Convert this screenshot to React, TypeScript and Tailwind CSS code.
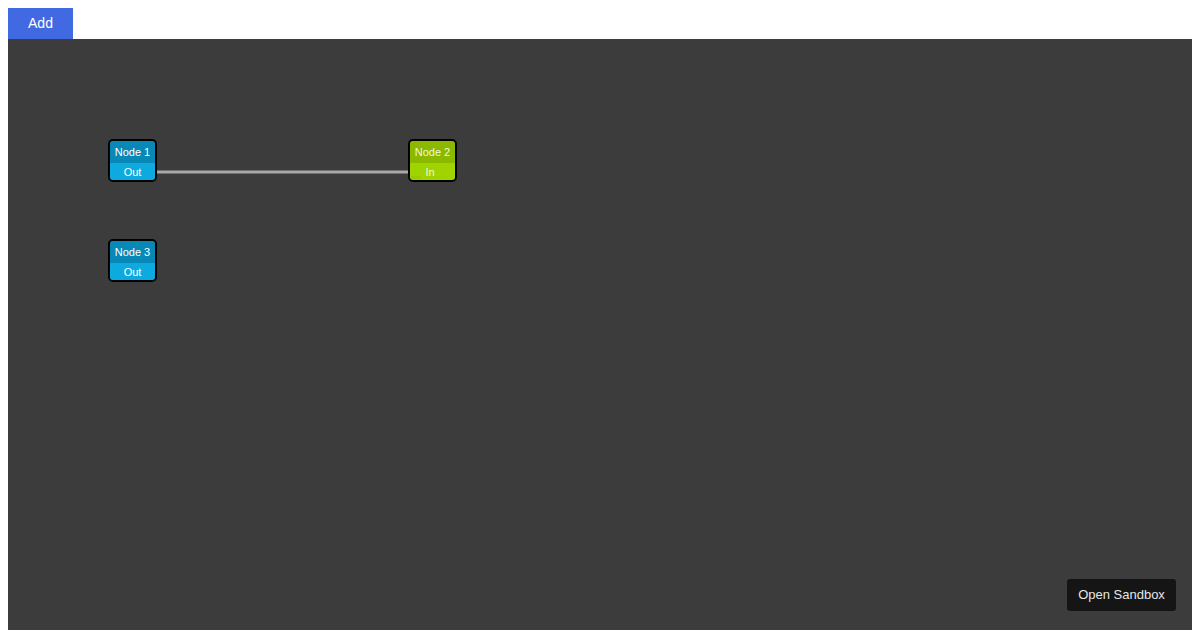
import React from "react";

type NodeProps = { x: number; y: number; title: string; port: string; variant: "blue" | "green" };

function Node({ x, y, title, port, variant }: NodeProps) {
  const head = variant === "blue" ? "bg-[#0888b6]" : "bg-[#8bb900]";
  const body = variant === "blue" ? "bg-[#0daae0]" : "bg-[#9fd400]";
  const txt = variant === "blue" ? "text-white" : "text-[#f4f7d8]";
  return (
    <div
      className="absolute w-[49px] border-2 border-black rounded-[5px] overflow-hidden"
      style={{ left: x, top: y }}
    >
      <div className={`h-[22px] ${head} ${txt} flex items-center justify-center text-[11px] leading-none`}>
        {title}
      </div>
      <div className={`relative h-[17px] ${body} ${txt} flex items-center justify-center text-[11px] leading-none pt-[1px]`}>
        {variant === "green" ? (
          <>
            <span className="mr-[5px]">{port}</span>
            <span className="absolute left-[1px] bottom-[0px] text-[5px] text-[#8fbf00]">xxxx</span>
          </>
        ) : (
          port
        )}
      </div>
    </div>
  );
}

export default function App() {
  return (
    <div className="p-2 bg-white" style={{ fontFamily: '"Liberation Sans", Arial, sans-serif' }}>
      <button className="w-[65px] h-[31px] bg-[#4169e1] text-white text-[14px] flex items-center justify-center">
        Add
      </button>
      <div className="relative h-[600px] bg-[#3c3c3c] overflow-hidden">
        <svg className="absolute left-0 top-0" width="1184" height="600">
          <line x1="149" y1="133" x2="401" y2="133" stroke="#a9a9a9" strokeWidth="3" />
        </svg>
        <Node x={100} y={100} title="Node 1" port="Out" variant="blue" />
        <Node x={400} y={100} title="Node 2" port="In" variant="green" />
        <Node x={100} y={200} title="Node 3" port="Out" variant="blue" />
        <button className="absolute left-[1059px] top-[540px] w-[109px] h-[32px] bg-[#151515] rounded-[3px] text-[13px] text-[#e6e6e6] flex items-center justify-center">
          Open Sandbox
        </button>
      </div>
    </div>
  );
}
